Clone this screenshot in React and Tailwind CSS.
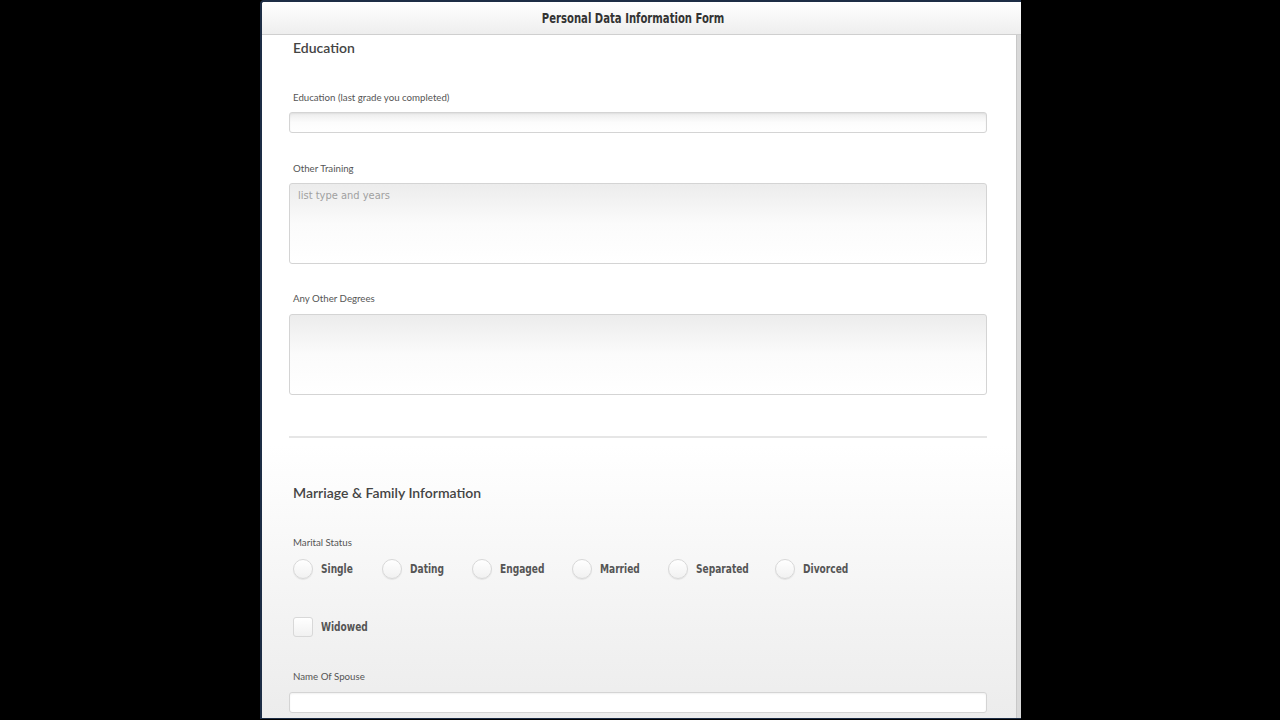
import React from "react";

const narrow = { fontFamily: '"Liberation Sans Narrow", "DejaVu Sans Condensed", "Roboto", sans-serif' };

function Label({ children, className = "" }) {
    return (
        <div className={`pl-[4px] text-[9.7px] text-[#555] font-['Lato',sans-serif] ${className}`}>
            {children}
        </div>
    );
}

function TextInput({ className = "" }) {
    return (
        <div
            className={`h-[21px] rounded-[3px] border border-[#d4d4d4] bg-gradient-to-b from-[#ececec] via-[#fcfcfc] to-white shadow-[inset_0_1px_2px_rgba(0,0,0,0.06)] ${className}`}
        />
    );
}

function TextArea({ placeholder, className = "" }) {
    return (
        <div
            className={`h-[81px] rounded-[3px] border border-[#d4d4d4] bg-gradient-to-b from-[#ececec] via-[#fbfbfb] to-white px-[8px] pt-[4px] text-[11px] text-[#a0a0a0] ${className}`}
            style={narrow}
        >
            {placeholder}
        </div>
    );
}

function Radio({ label }) {
    return (
        <div className="flex items-center gap-[8px]">
            <span className="w-[20px] h-[20px] flex-shrink-0 rounded-full border border-[#d8d8d8] bg-gradient-to-b from-white to-[#f1f1f1] shadow-[0_1px_1px_rgba(0,0,0,0.08)]" />
            <span className="inline-block origin-left scale-x-[0.84] text-[12px] font-bold text-[#555]" style={narrow}>
                {label}
            </span>
        </div>
    );
}

export default function App() {
    const statuses = [
        { label: "Single", w: "w-[89px]" },
        { label: "Dating", w: "w-[90px]" },
        { label: "Engaged", w: "w-[100px]" },
        { label: "Married", w: "w-[96px]" },
        { label: "Separated", w: "w-[107px]" },
        { label: "Divorced", w: "w-[90px]" },
    ];

    return (
        <div className="w-[1280px] h-[720px] bg-black overflow-hidden">
            <div className="ml-[260px] w-[761px] h-[719px] flex flex-col border-l-2 border-t-2 border-b border-[#1d2d45] rounded-tl-[4px] bg-white overflow-hidden">
                {/* header */}
                <div className="h-[33px] flex-shrink-0 flex items-center justify-center pr-[16px] border-b border-[#cfcfcf] bg-gradient-to-b from-white to-[#eeeeee]">
                    <h1 className="inline-block scale-x-[0.8] text-[14px] font-bold text-[#333]" style={narrow}>
                        Personal Data Information Form
                    </h1>
                </div>

                <div className="flex-1 flex min-h-0">
                    <div className="flex-1 pl-[27px] pr-[29px] bg-gradient-to-b from-white from-60% to-[#ececec]">
                        <h2 className="mt-[2px] pl-[4px] text-[14px] font-semibold text-[#444] font-['Lato',sans-serif]">
                            Education
                        </h2>

                        <Label className="mt-[32px]">Education (last grade you completed)</Label>
                        <TextInput className="mt-[7px]" />

                        <Label className="mt-[28px]">Other Training</Label>
                        <TextArea className="mt-[8px]" placeholder="list type and years" />

                        <Label className="mt-[27px]">Any Other Degrees</Label>
                        <TextArea className="mt-[8px]" />

                        <div className="mt-[41px] h-[2px] bg-[#e6e6e6]" />

                        <h2 className="mt-[44px] pl-[4px] text-[14px] font-semibold text-[#444] font-['Lato',sans-serif]">
                            Marriage &amp; Family Information
                        </h2>

                        <Label className="mt-[32px]">Marital Status</Label>
                        <div className="mt-[10px] pl-[4px] flex">
                            {statuses.map((s) => (
                                <div key={s.label} className={s.w}>
                                    <Radio label={s.label} />
                                </div>
                            ))}
                        </div>

                        <div className="mt-[38px] pl-[4px] flex items-center gap-[8px]">
                            <span className="w-[20px] h-[20px] rounded-[3px] border border-[#d8d8d8] bg-gradient-to-b from-white to-[#f1f1f1]" />
                            <span className="inline-block origin-left scale-x-[0.84] text-[12px] font-bold text-[#555]" style={narrow}>
                                Widowed
                            </span>
                        </div>

                        <Label className="mt-[32px]">Name Of Spouse</Label>
                        <TextInput className="mt-[8px] bg-none bg-white" />
                    </div>
                    <div className="w-[5px] bg-[#d9d9d9] border-l border-[#c8c8c8]" />
                </div>
            </div>
        </div>
    );
}
